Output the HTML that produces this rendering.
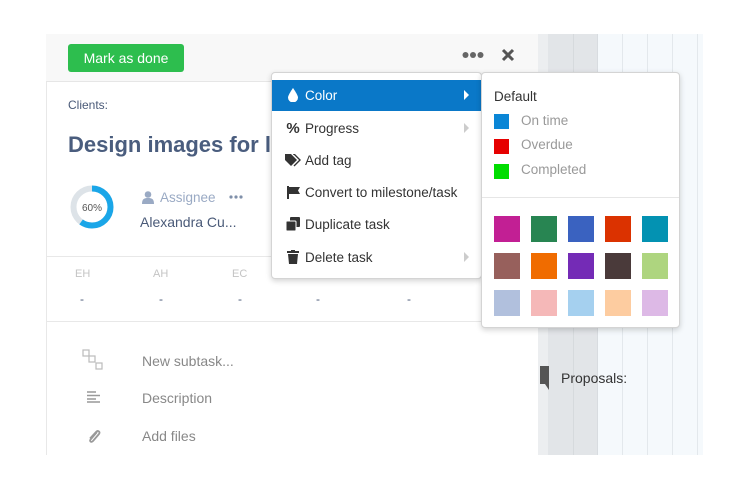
<!DOCTYPE html>
<html><head><meta charset="utf-8"><style>
*{margin:0;padding:0;box-sizing:border-box}
body{width:749px;height:489px;background:#fff;font-family:"Liberation Sans",sans-serif;position:relative;overflow:hidden}
.abs{position:absolute}
.panel{left:46px;top:34px;width:493px;height:421px;background:#fff;border-left:1px solid #e8e8e8}
.hdr{left:46px;top:34px;width:493px;height:48px;background:#f8f8f8;border-bottom:1px solid #e6e6e6}
.btn{left:68px;top:44px;width:116px;height:28px;background:#2dbe4e;border-radius:3px;color:#fff;font-size:14px;line-height:28px;text-align:center}
.t{color:#4a5a78}
.menu{left:271px;top:72px;width:211px;height:207px;background:#fff;border:1px solid #d4d4d4;border-radius:4px;box-shadow:0 2px 6px rgba(0,0,0,.18)}
.mi{position:absolute;left:0;width:209px;height:31px;font-size:13.5px;color:#333;line-height:31px;padding-left:33px}
.ic{position:absolute;left:13px;top:0;width:16px;text-align:center}
.arr{position:absolute;right:12px;top:10px;width:0;height:0;border-top:5px solid transparent;border-bottom:5px solid transparent;border-left:5px solid #ccc}
.sub{left:481px;top:72px;width:199px;height:256px;background:#fff;border:1px solid #d4d4d4;border-radius:4px;box-shadow:0 2px 6px rgba(0,0,0,.18)}
.sw{position:absolute;width:26px;height:26px}
.lg{position:absolute;left:12px;width:15px;height:15px}
.lt{position:absolute;left:39px;font-size:13.5px;color:#999}
</style></head><body>
<div class="abs panel"></div>
<div class="abs hdr"></div>
<div class="abs btn">Mark as done</div>
<svg class="abs" style="left:462px;top:51px" width="22" height="8"><circle cx="3.5" cy="4" r="3" fill="#666"/><circle cx="11" cy="4" r="3" fill="#666"/><circle cx="18.5" cy="4" r="3" fill="#666"/></svg>
<svg class="abs" style="left:500px;top:47px" width="16" height="16"><path d="M3 3L13 13M13 3L3 13" stroke="#555" stroke-width="3"/></svg>
<div class="abs" style="left:538px;top:34px;width:10px;height:421px;background:#eceef0"></div>
<div class="abs" style="left:548px;top:34px;width:50px;height:421px;background:#e2e5e8;border-right:1px solid #d8dce0"></div>
<div class="abs" style="left:573px;top:34px;width:1px;height:421px;background:#d6dadd"></div>
<div class="abs" style="left:598px;top:34px;width:105px;height:421px;background:#f5f9fc"></div>
<div class="abs" style="left:622px;top:34px;width:1px;height:421px;background:#e3e8ec"></div>
<div class="abs" style="left:647px;top:34px;width:1px;height:421px;background:#e3e8ec"></div>
<div class="abs" style="left:672px;top:34px;width:1px;height:421px;background:#e3e8ec"></div>
<div class="abs" style="left:697px;top:34px;width:1px;height:421px;background:#e3e8ec"></div>
<svg class="abs" style="left:540px;top:366px" width="10" height="26"><path d="M0 0H9V24L5 18H0Z" fill="#555"/></svg>
<div class="abs" style="left:561px;top:370px;font-size:14px;color:#333">Proposals:</div>
<div class="abs t" style="left:68px;top:98px;font-size:12px">Clients:</div>
<div class="abs" style="left:68px;top:132px;font-size:22px;font-weight:bold;color:#4a5d7e">Design images for l</div>
<svg class="abs" style="left:70px;top:185px" width="44" height="44"><circle cx="22" cy="22" r="18.5" fill="none" stroke="#dde3e8" stroke-width="6"/><circle cx="22" cy="22" r="18.5" fill="none" stroke="#1aa6e8" stroke-width="6" stroke-dasharray="69.7 200" transform="rotate(-90 22 22)"/><text x="22" y="26" font-size="10" text-anchor="middle" fill="#555" font-family="Liberation Sans">60%</text></svg>
<svg class="abs" style="left:142px;top:191px" width="12" height="13"><circle cx="6" cy="3.5" r="3.3" fill="#9aaac4"/><path d="M0 13C0 8 2 7 6 7S12 8 12 13Z" fill="#9aaac4"/></svg>
<div class="abs" style="left:160px;top:190px;font-size:13.5px;color:#9aaac4">Assignee</div>
<svg class="abs" style="left:229px;top:195px" width="14" height="4"><circle cx="2" cy="2" r="1.6" fill="#8090aa"/><circle cx="7" cy="2" r="1.6" fill="#8090aa"/><circle cx="12" cy="2" r="1.6" fill="#8090aa"/></svg>
<div class="abs t" style="left:140px;top:214px;font-size:14px">Alexandra Cu...</div>
<div class="abs" style="left:46px;top:256px;width:493px;height:1px;background:#e8e8e8"></div>
<div class="abs" style="left:46px;top:321px;width:493px;height:1px;background:#e8e8e8"></div>
<div class="abs" style="left:75px;top:268px;font-size:11px;color:#c4c4c4">EH</div>
<div class="abs" style="left:153px;top:268px;font-size:11px;color:#c4c4c4">AH</div>
<div class="abs" style="left:232px;top:268px;font-size:11px;color:#c4c4c4">EC</div>
<div class="abs t" style="left:80px;top:292px;font-size:12px">-</div>
<div class="abs t" style="left:159px;top:292px;font-size:12px">-</div>
<div class="abs t" style="left:238px;top:292px;font-size:12px">-</div>
<div class="abs t" style="left:316px;top:292px;font-size:12px">-</div>
<div class="abs t" style="left:407px;top:292px;font-size:12px">-</div>
<svg class="abs" style="left:82px;top:349px" width="26" height="24" fill="none" stroke="#bbb" stroke-width="1.2"><rect x="1" y="1" width="6" height="6"/><rect x="7" y="7" width="6" height="6"/><rect x="14" y="14" width="6" height="6"/></svg>
<div class="abs" style="left:142px;top:353px;font-size:14px;color:#888">New subtask...</div>
<svg class="abs" style="left:87px;top:391px" width="14" height="12"><path d="M0 1H9M0 4.5H13M0 8H9M0 11H13" stroke="#999" stroke-width="1.6"/></svg>
<div class="abs" style="left:142px;top:390px;font-size:14px;color:#888">Description</div>
<svg class="abs" style="left:87px;top:429px" width="14" height="16"><path d="M10 3L4 10C2 12 4 14 6 12L12 5C13.5 3 11 1 9.5 2.5L3 9.5" fill="none" stroke="#999" stroke-width="1.8"/></svg>
<div class="abs" style="left:142px;top:428px;font-size:14px;color:#888">Add files</div>
<div class="abs menu">
 <div class="mi" style="top:7px;background:#0a78c8;color:#fff;"><span class="ic"><svg width="10" height="14" style="vertical-align:-2px"><path d="M5 0C5 0 0 7 0 9.5A5 5 0 0 0 10 9.5C10 7 5 0 5 0Z" fill="#fff"/></svg></span>Color<span class="arr" style="border-left-color:#fff"></span></div>
 <div class="mi" style="top:40px"><span class="ic" style="font-weight:bold;font-size:15px">%</span>Progress<span class="arr"></span></div>
 <div class="mi" style="top:72px"><span class="ic"><svg width="16" height="13" style="vertical-align:-2px"><path d="M0 0H6L12 6L6 12L0 6Z" fill="#333"/><path d="M8 0H9L15 6L9 12" fill="none" stroke="#333" stroke-width="1.4"/></svg></span>Add tag</div>
 <div class="mi" style="top:104px"><span class="ic"><svg width="13" height="13" style="vertical-align:-2px"><path d="M1 0V13" stroke="#333" stroke-width="2"/><path d="M2 1H13L11 4.5L13 8H2Z" fill="#333"/></svg></span>Convert to milestone/task</div>
 <div class="mi" style="top:136px"><span class="ic"><svg width="14" height="14" style="vertical-align:-2px"><rect x="4" y="0" width="10" height="10" rx="1" fill="#333"/><rect x="0" y="4" width="10" height="10" rx="1" fill="#333" stroke="#fff" stroke-width="1"/></svg></span>Duplicate task</div>
 <div class="mi" style="top:169px"><span class="ic"><svg width="12" height="14" style="vertical-align:-2px"><rect x="0" y="1" width="12" height="2" fill="#333"/><rect x="4" y="0" width="4" height="2" fill="#333"/><path d="M1 4H11L10 14H2Z" fill="#333"/></svg></span>Delete task<span class="arr"></span></div>
</div>
<div class="abs sub">
 <div style="position:absolute;left:12px;top:16px;font-size:13.5px;color:#333">Default</div>
 <div class="lg" style="top:41px;background:#0a86d6"></div><div class="lt" style="top:40px">On time</div>
 <div class="lg" style="top:66px;background:#e60000"></div><div class="lt" style="top:64px">Overdue</div>
 <div class="lg" style="top:91px;background:#00dd00"></div><div class="lt" style="top:89px">Completed</div>
 <div style="position:absolute;left:0;top:124px;width:197px;height:1px;background:#e6e6e6"></div>
 <div class="sw" style="left:12px;top:143px;background:#c21f94"></div>
 <div class="sw" style="left:49px;top:143px;background:#288552"></div>
 <div class="sw" style="left:86px;top:143px;background:#3a62c0"></div>
 <div class="sw" style="left:123px;top:143px;background:#db3200"></div>
 <div class="sw" style="left:160px;top:143px;background:#0392b2"></div>
 <div class="sw" style="left:12px;top:180px;background:#97605c"></div>
 <div class="sw" style="left:49px;top:180px;background:#f06c00"></div>
 <div class="sw" style="left:86px;top:180px;background:#742bb6"></div>
 <div class="sw" style="left:123px;top:180px;background:#4a3a3a"></div>
 <div class="sw" style="left:160px;top:180px;background:#aed57f"></div>
 <div class="sw" style="left:12px;top:217px;background:#b1c0dd"></div>
 <div class="sw" style="left:49px;top:217px;background:#f5b8b8"></div>
 <div class="sw" style="left:86px;top:217px;background:#a5d0ef"></div>
 <div class="sw" style="left:123px;top:217px;background:#fdcca0"></div>
 <div class="sw" style="left:160px;top:217px;background:#ddb9e6"></div>
</div>
</body></html>
